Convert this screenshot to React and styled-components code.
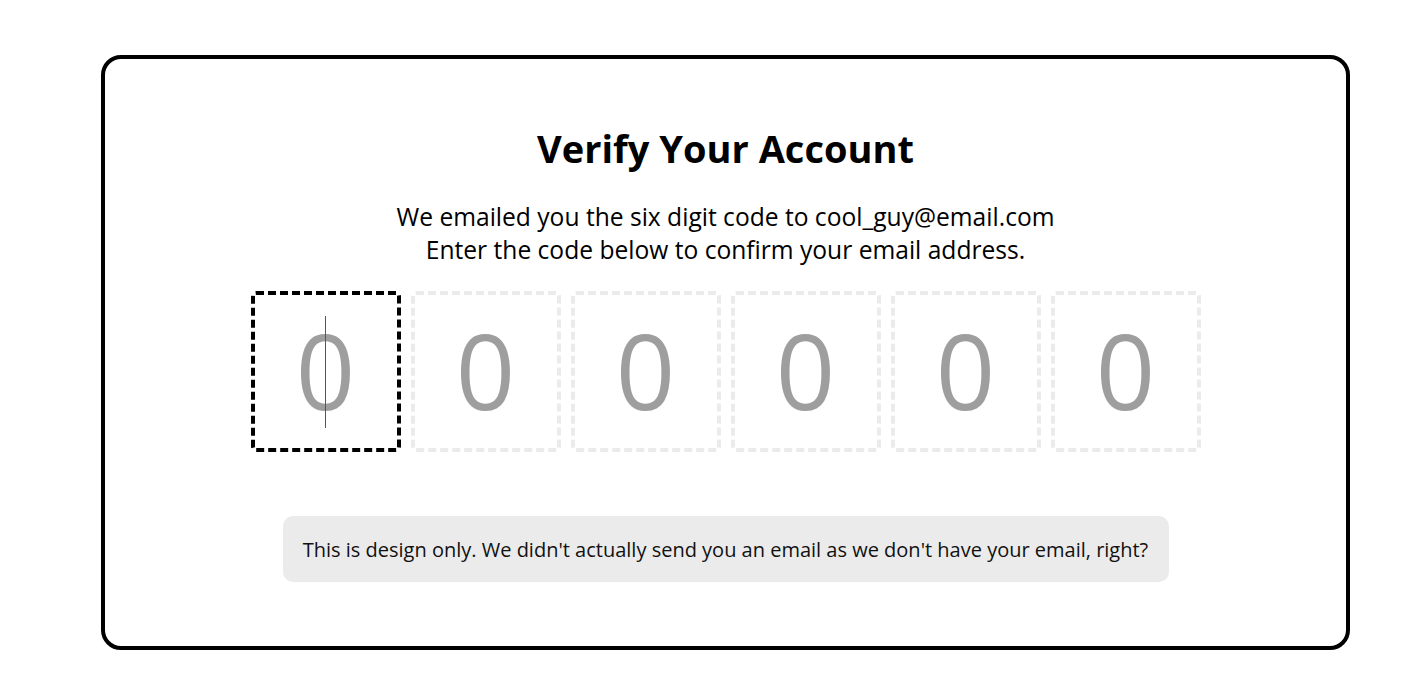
import styled, { createGlobalStyle } from 'styled-components';

const GlobalStyle = createGlobalStyle`
   body {
      margin: 0;
      background: #fff;
      font-family: "Open Sans", "Liberation Sans", sans-serif;
      color: #000;
   }
`;

const Page = styled.div`
   padding: 55px 0 0 101px;
`;

const Card = styled.div`
   box-sizing: border-box;
   width: 1249px;
   height: 595px;
   border: 4px solid #000;
   border-radius: 20px;
   display: flex;
   flex-direction: column;
   align-items: center;
   padding-top: 63px;
`;

const Title = styled.h1`
   margin: 0;
   font-size: 38px;
   font-weight: 700;
   line-height: normal;
`;

const Subtitle = styled.p`
   margin: 26px 0 0;
   font-size: 24.6px;
   line-height: 33px;
   text-align: center;
`;

const CodeRow = styled.div`
   display: flex;
   gap: 10px;
   margin-top: 25px;
`;

const DigitWrap = styled.div`
   position: relative;
`;

const DigitInput = styled.input`
   box-sizing: border-box;
   width: 150px;
   height: 161px;
   border: 4px dashed ${(p) => (p.$active ? '#000' : '#ebebeb')};
   border-radius: 5px;
   outline: none;
   background: #fff;
   text-align: center;
   font-family: "Open Sans", "Liberation Sans", sans-serif;
   font-size: 104px;
   color: #9e9e9e;
   padding: 0 0 4px;

   &::placeholder {
      color: #9e9e9e;
      opacity: 1;
   }
`;

// fake caret, the focused field shows one over its placeholder
const Caret = styled.span`
   position: absolute;
   left: 74px;
   top: 25px;
   width: 1px;
   height: 112px;
   background: #d6135f;
`;

const Note = styled.div`
   box-sizing: border-box;
   margin-top: 64px;
   width: 886px;
   height: 66px;
   display: flex;
   align-items: center;
   justify-content: center;
   background: #ebebeb;
   border-radius: 10px;
   font-size: 20px;
   color: #111;
`;

const digits = [0, 1, 2, 3, 4, 5];

function App() {
   return (
      <Page>
         <GlobalStyle />
         <Card>
            <Title>Verify Your Account</Title>
            <Subtitle>
               We emailed you the six digit code to cool_guy@email.com
               <br />
               Enter the code below to confirm your email address.
            </Subtitle>

            <CodeRow>
               {digits.map((i) => (
                  <DigitWrap key={i}>
                     <DigitInput
                        $active={i === 0}
                        placeholder="0"
                        maxLength={1}
                        readOnly
                     />
                     {i === 0 && <Caret />}
                  </DigitWrap>
               ))}
            </CodeRow>

            <Note>
               This is design only. We didn't actually send you an email as we
               don't have your email, right?
            </Note>
         </Card>
      </Page>
   );
}

export default App;
